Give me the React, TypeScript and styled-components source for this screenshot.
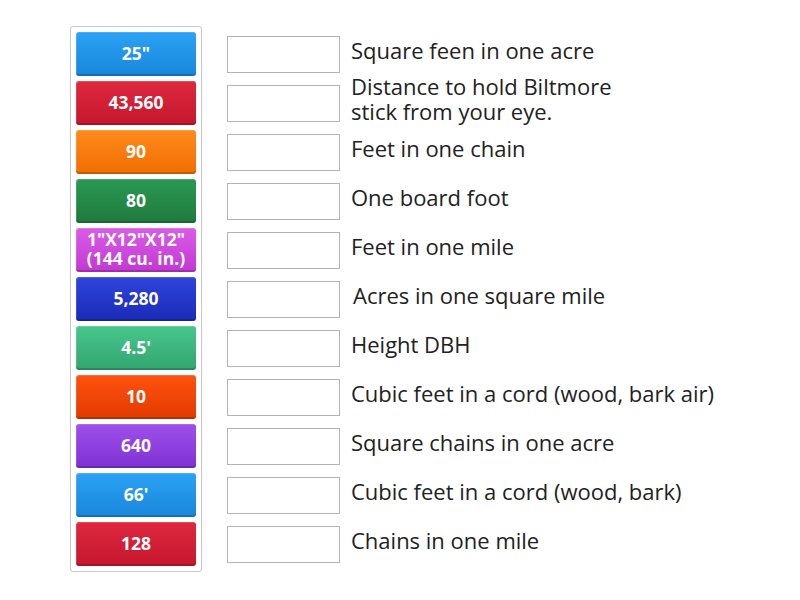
import * as React from 'react';
import styled, { createGlobalStyle } from 'styled-components';

interface ITileColor {
    top: string;
    bottom: string;
}

const colors: { [key: string]: ITileColor } = {
    blue: { top: '#2ba2f5', bottom: '#1887dc' },
    red: { top: '#de2840', bottom: '#c4172d' },
    orange: { top: '#ff8a1e', bottom: '#f06e00' },
    green: { top: '#2a9952', bottom: '#1e7a3d' },
    pink: { top: '#db5ce8', bottom: '#c138d2' },
    navy: { top: '#2e44dc', bottom: '#1b2bb8' },
    teal: { top: '#47c78d', bottom: '#33a56f' },
    fire: { top: '#ff5210', bottom: '#e23a00' },
    purple: { top: '#9e50ea', bottom: '#8031d4' },
};

const tiles = [
    { label: '25"', color: 'blue' },
    { label: '43,560', color: 'red' },
    { label: '90', color: 'orange' },
    { label: '80', color: 'green' },
    { label: '1"X12"X12"\n(144 cu. in.)', color: 'pink' },
    { label: '5,280', color: 'navy' },
    { label: "4.5'", color: 'teal' },
    { label: '10', color: 'fire' },
    { label: '640', color: 'purple' },
    { label: "66'", color: 'blue' },
    { label: '128', color: 'red' },
];

const prompts = [
    { text: 'Square feen in one acre' },
    { text: 'Distance to hold Biltmore\nstick from your eye.' },
    { text: 'Feet in one chain' },
    { text: 'One board foot' },
    { text: 'Feet in one mile' },
    { text: 'Acres in one square mile', shift: 2 },
    { text: 'Height DBH' },
    { text: 'Cubic feet in a cord (wood, bark air)' },
    { text: 'Square chains in one acre' },
    { text: 'Cubic feet in a cord (wood, bark)' },
    { text: 'Chains in one mile' },
];

const GlobalStyle = createGlobalStyle`
    body {
        margin: 0;
        background: #fff;
        font-family: "Open Sans", "Noto Sans", sans-serif;
    }
`;

const Page = styled.div`
    display: flex;
    align-items: flex-start;
    padding: 26px 0 0 70px;
    gap: 25px;
`;

const TilePanel = styled.div`
    display: flex;
    flex-direction: column;
    gap: 5px;
    padding: 5px;
    border: 1px solid #c8c8c8;
    border-radius: 3px;
    box-shadow: 0 1px 2px rgba(0, 0, 0, 0.08);
`;

const Tile = styled.div<{ tone: ITileColor }>`
    width: 120px;
    height: 44px;
    box-sizing: border-box;
    padding-bottom: 2px;
    display: flex;
    align-items: center;
    justify-content: center;
    text-align: center;
    white-space: pre-line;
    border-radius: 3px;
    background: linear-gradient(${p => p.tone.top}, ${p => p.tone.bottom});
    box-shadow: inset 0 -2px 0 rgba(0, 0, 0, 0.18), inset 1px 1px 0 rgba(255, 255, 255, 0.15);
    color: #fff;
    font-weight: 700;
    font-size: 17.5px;
    line-height: 19px;
`;

const Targets = styled.div`
    display: flex;
    flex-direction: column;
    gap: 5px;
    padding-top: 6px;
`;

const Row = styled.div`
    display: flex;
    align-items: center;
    height: 44px;
`;

const Slot = styled.div`
    width: 113px;
    height: 37px;
    box-sizing: border-box;
    border: 1px solid #b4b4b4;
    background: #fff;
    flex-shrink: 0;
`;

const Prompt = styled.div<{ shift?: number }>`
    margin-left: ${p => 11 + (p.shift || 0)}px;
    margin-top: -8px;
    font-size: 22px;
    line-height: 25px;
    color: #222;
    white-space: pre;
`;

const App: React.FC = () => (
    <>
        <GlobalStyle />
        <Page>
            <TilePanel>
                {tiles.map((t, idx) => (
                    <Tile key={idx} tone={colors[t.color]}>
                        {t.label}
                    </Tile>
                ))}
            </TilePanel>
            <Targets>
                {prompts.map((p, idx) => (
                    <Row key={idx}>
                        <Slot />
                        <Prompt shift={p.shift}>{p.text}</Prompt>
                    </Row>
                ))}
            </Targets>
        </Page>
    </>
);

export default App;
